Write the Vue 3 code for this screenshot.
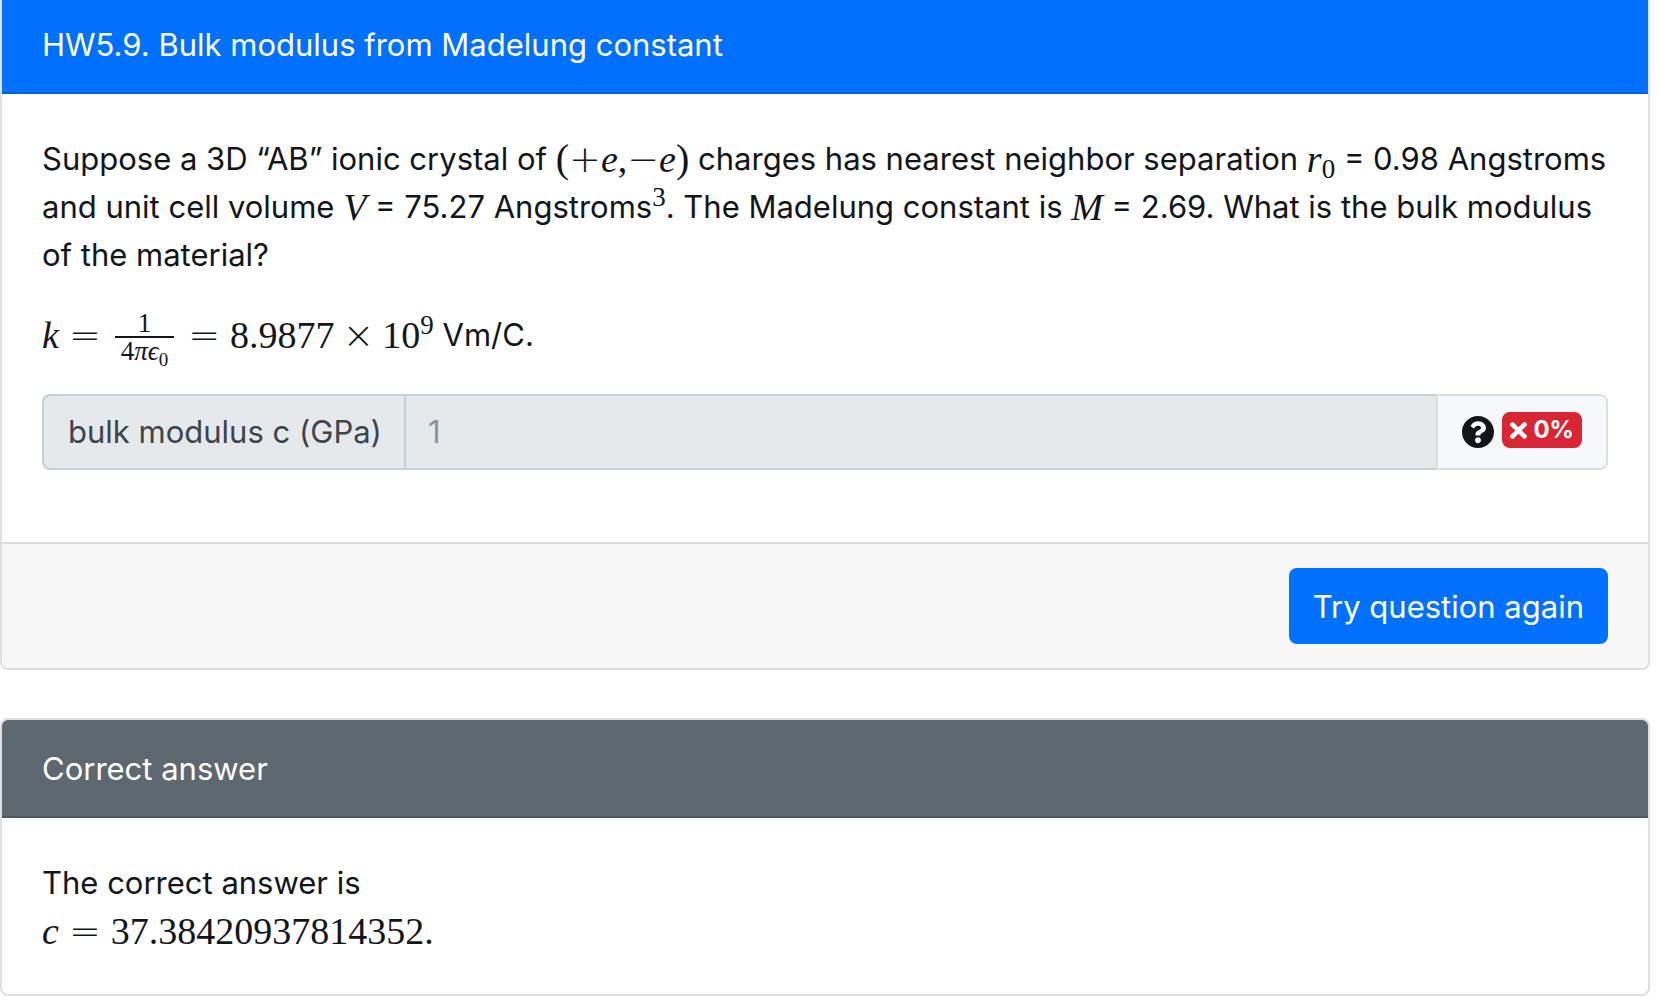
<script setup>
import { ref } from 'vue'

const question = {
  title: 'HW5.9. Bulk modulus from Madelung constant',
  separation: '0.98',
  volume: '75.27',
  madelung: '2.69',
}
const submitted = ref('1')
const correct = '37.38420937814352'
</script>

<template>
  <main class="page">
    <section class="card question">
      <h1 class="card-header primary">{{ question.title }}</h1>
      <div class="card-body">
        <p>
          Suppose a 3D “AB” ionic crystal of
          <span class="math"><span class="paren">(</span><span class="op">+</span><i>e</i>,<span class="op">−</span><i>e</i><span class="paren">)</span></span>
          charges has nearest neighbor separation
          <span class="math"><i>r</i><sub>0</sub></span>
          = {{ question.separation }} Angstroms and unit cell volume
          <span class="math"><i>V</i></span>
          = {{ question.volume }} Angstroms<span class="math"><sup>3</sup></span>. The Madelung constant is
          <span class="math"><i>M</i></span>
          = {{ question.madelung }}. What is the bulk modulus of the material?
        </p>
        <p class="constant">
          <span class="math"><i>k</i><span class="op rel">=</span><span class="frac"><span class="num">1</span><span class="den">4<i>πϵ</i><sub>0</sub></span></span><span class="op rel">=</span>8.9877<span class="op times">×</span>10<sup>9</sup></span>
          Vm/C.
        </p>
        <div class="input-group">
          <label for="modulus">bulk modulus c (GPa)</label>
          <input id="modulus" v-model="submitted" type="text" disabled />
          <div class="feedback">
            <button class="help" type="button" aria-label="Help">
              <svg viewBox="8 8 496 496" width="32" height="32" aria-hidden="true">
                <path fill="currentColor" d="M504 256c0 136.997-111.043 248-248 248S8 392.997 8 256C8 119.083 119.043 8 256 8s248 111.083 248 248zM262.655 90c-54.497 0-89.255 22.957-116.549 63.758-3.536 5.286-2.353 12.415 2.715 16.258l34.699 26.31c5.205 3.947 12.621 3.008 16.665-2.122 17.864-22.658 30.113-35.797 57.303-35.797 20.429 0 45.698 13.148 45.698 32.958 0 14.976-12.363 22.667-32.534 33.976C247.128 238.528 216 254.941 216 296v4c0 6.627 5.373 12 12 12h56c6.627 0 12-5.373 12-12v-1.333c0-28.462 83.186-29.647 83.186-106.667 0-58.002-60.165-102-116.531-102zM256 338c-25.365 0-46 20.635-46 46 0 25.364 20.635 46 46 46s46-20.636 46-46c0-25.365-20.635-46-46-46z" />
              </svg>
            </button>
            <span class="badge">
              <svg viewBox="0 80 352 352" width="17" height="17" aria-hidden="true">
                <path fill="currentColor" d="M242.72 256l100.07-100.07c12.28-12.28 12.28-32.19 0-44.48l-22.24-22.24c-12.28-12.28-32.19-12.28-44.48 0L176 189.28 75.93 89.21c-12.28-12.28-32.19-12.28-44.48 0L9.21 111.45c-12.28 12.28-12.28 32.19 0 44.48L109.28 256 9.21 356.07c-12.28 12.28-12.28 32.19 0 44.48l22.24 22.24c12.28 12.28 32.2 12.28 44.48 0L176 322.72l100.07 100.07c12.28 12.28 32.2 12.28 44.48 0l22.24-22.24c12.28-12.28 12.28-32.19 0-44.48L242.72 256z" />
              </svg>
              0%
            </span>
          </div>
        </div>
      </div>
      <footer class="card-footer">
        <button class="retry" type="button">Try question again</button>
      </footer>
    </section>

    <section class="card">
      <h2 class="card-header secondary">Correct answer</h2>
      <div class="card-body">
        <p>
          The correct answer is<br />
          <span class="math"><i>c</i><span class="op rel">=</span>{{ correct }}.</span>
        </p>
      </div>
    </section>
  </main>
</template>

<style>
body {
  background: #fff;
}
</style>

<style scoped>
.page,
.page * {
  box-sizing: border-box;
}
.page {
  display: flex;
  flex-direction: column;
  gap: 48px;
  padding-right: 8px;
  color: #12161b;
  font-family: Inter, "Liberation Sans", sans-serif;
  font-size: 31px;
  line-height: 48px;
}
.card {
  border: 2px solid #dfdfdf;
  border-radius: 8px;
  overflow: hidden;
}
.question {
  border-top: 0;
  border-top-left-radius: 0;
  border-top-right-radius: 0;
}
.card-header {
  margin: 0;
  padding: 25px 40px 23px;
  color: #fff;
  font-size: inherit;
  font-weight: 400;
}
.primary {
  padding-top: 21px;
  background: #0070ff;
  border-bottom: 2px solid #0062df;
}
.secondary {
  background: #5e6870;
  border-bottom: 2px solid #50575f;
}
.card-body {
  padding: 41px 40px 39px;
}
.question .card-body {
  padding-bottom: 72px;
}
p {
  margin: 0;
}
.constant {
  margin: 31px 0 30px;
}
.math {
  font-family: "Liberation Serif", "DejaVu Serif", serif;
  font-size: 38px;
  line-height: 0;
  white-space: nowrap;
  vertical-align: -2px;
}
.op {
  font-family: "DejaVu Sans", sans-serif;
  font-weight: 200;
}
.rel {
  margin: 0 10px;
}
.times {
  margin: 0 8px;
}
.paren {
  font-size: 40px;
}
sub,
sup {
  font-size: 27px;
  line-height: 0;
}
sup {
  vertical-align: 14px;
}
sub {
  vertical-align: -6px;
}
.frac {
  display: inline-flex;
  flex-direction: column;
  margin: 0 4px;
  font-size: 27px;
  line-height: 26px;
  text-align: center;
  vertical-align: 16px;
}
.num {
  border-bottom: 2px solid;
}
.den {
  padding: 0 6px;
}
.den sub {
  font-size: 19px;
}
.input-group {
  display: flex;
  height: 76px;
}
label {
  padding: 12px 22px 12px 24px;
  background: #e5e9ec;
  border: 2px solid #c6ced6;
  border-right: 0;
  border-radius: 8px 0 0 8px;
  color: #3d444c;
}
input {
  flex: 1;
  min-width: 0;
  padding: 12px 22px;
  background: #e5e9ec;
  border: 2px solid #c6ced6;
  border-right: 0;
  border-radius: 0;
  color: #8494a4;
  font: inherit;
}
.feedback {
  display: flex;
  align-items: center;
  gap: 8px;
  padding: 0 24px;
  background: #f7f8fa;
  border: 2px solid #dbe0e5;
  border-radius: 0 8px 8px 0;
}
.help {
  display: flex;
  padding: 0;
  border: 0;
  background: none;
  color: #12161b;
}
.badge {
  display: flex;
  align-items: center;
  gap: 6px;
  height: 36px;
  margin-bottom: 4px;
  padding: 0 8px;
  border-radius: 8px;
  background: #d92534;
  color: #fff;
  font-size: 24px;
  font-weight: 700;
  line-height: 36px;
}
.card-footer {
  display: flex;
  justify-content: flex-end;
  padding: 24px 40px;
  background: #f7f7f7;
  border-top: 2px solid #dbdbdb;
}
.retry {
  padding: 15px 24px 13px;
  border: 0;
  border-radius: 8px;
  background: #0070ff;
  color: #fff;
  font: inherit;
}
</style>
